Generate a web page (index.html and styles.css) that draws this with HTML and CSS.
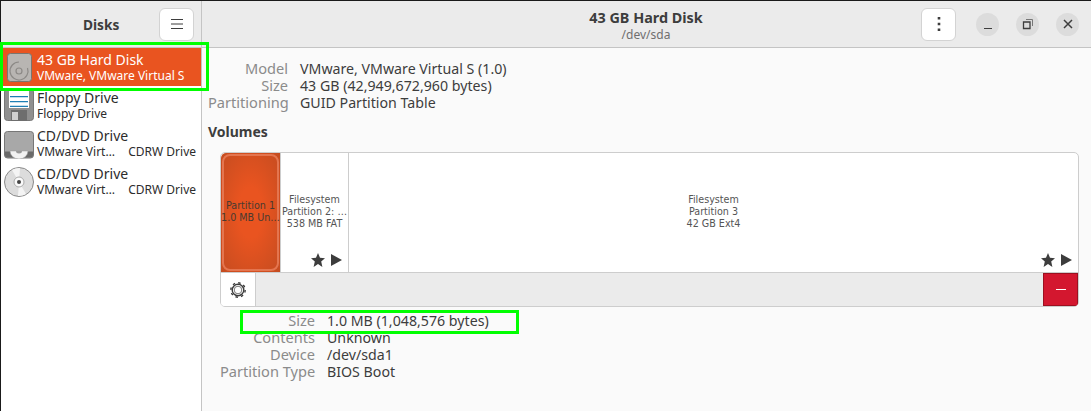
FILE: index.html
```html
<!DOCTYPE html>
<html lang="en">

<head>
  <meta charset="UTF-8" />
  <meta name="viewport" content="width=device-width, initial-scale=1.0" />
  <title>Disks</title>
  <link rel="stylesheet" href="styles.css">
</head>

<body>
  <div class="window">
    <!-- Left column: drive list -->
    <aside class="sidebar">
      <header class="side-head">
        <span class="side-title">Disks</span>
        <button class="head-btn side-menu">
          <svg width="12" height="10" viewBox="0 0 12 10"><path d="M0 .5h12M0 5h12M0 9.5h12" stroke="#3d3d3d" fill="none" /></svg>
        </button>
      </header>
      <ul class="drives">
        <li class="drive selected">
          <svg class="drive-icon" width="32" height="32" viewBox="0 0 32 32">
            <rect x="3.500" y="2.500" width="24" height="28" rx="3" fill="#b8b5b2" stroke="#7a756f" />
            <path d="M23.500 17A9 9 0 1 1 15 11" fill="none" stroke="#8c8986" stroke-width="1.200" />
            <circle cx="15" cy="20" r="3" fill="none" stroke="#8c8986" stroke-width="1.200" />
          </svg>
          <div class="drive-text">
            <div class="drive-name">43 GB Hard Disk</div>
            <div class="drive-sub"><span>VMware, VMware Virtual S</span></div>
          </div>
        </li>
        <li class="drive">
          <svg class="drive-icon" width="32" height="32" viewBox="0 0 32 32">
            <rect x=".500" y="0" width="29" height="31.500" rx="3" fill="#8f8f8f" stroke="#777" />
            <rect x="5" y="0" width="20" height="19" fill="#fff" />
            <path d="M6 7.700h18M6 12.700h18M6 17.300h18" stroke="#1f7fb5" stroke-width="1.200" />
            <rect x="7" y="21" width="16" height="11" fill="#6e6e6e" />
            <rect x="8" y="23" width="6" height="8" fill="#d0d0d0" />
          </svg>
          <div class="drive-text">
            <div class="drive-name">Floppy Drive</div>
            <div class="drive-sub"><span>Floppy Drive</span></div>
          </div>
        </li>
        <li class="drive">
          <svg class="drive-icon" width="32" height="32" viewBox="0 0 32 32">
            <rect x=".500" y="4.500" width="29" height="26.500" rx="3" fill="#a8a8a8" stroke="#777" />
            <path d="M1 24.500h28V28a2.500 2.500 0 0 1-2.500 2.500h-23A2.500 2.500 0 0 1 1 28z" fill="#6a6a6a" />
            <path d="M6 24h18a9 8 0 0 1-18 0z" fill="#f2f2f2" stroke="#999" stroke-width=".500" />
            <path d="M12 24h6a3 2.500 0 0 1-6 0z" fill="#999" />
          </svg>
          <div class="drive-text">
            <div class="drive-name">CD/DVD Drive</div>
            <div class="drive-sub split"><span>VMware Virt…</span><span>CDRW Drive</span></div>
          </div>
        </li>
        <li class="drive">
          <svg class="drive-icon" width="32" height="32" viewBox="0 0 32 32">
            <circle cx="15" cy="17" r="14.500" fill="#dcdcdc" stroke="#8a8a8a" />
            <path d="M15 17 8 5a14 14 0 0 1 8-2zM15 17l7 12a14 14 0 0 1-8 2z" fill="#f4f4f4" />
            <circle cx="15" cy="17" r="5" fill="#fafafa" stroke="#aaa" />
            <circle cx="15" cy="17" r="2" fill="#444" />
          </svg>
          <div class="drive-text">
            <div class="drive-name">CD/DVD Drive</div>
            <div class="drive-sub split"><span>VMware Virt…</span><span>CDRW Drive</span></div>
          </div>
        </li>
      </ul>
    </aside>

    <!-- Right column: selected drive -->
    <main class="main">
      <header class="main-head">
        <div class="head-title">
          <div class="title">43 GB Hard Disk</div>
          <div class="subtitle">/dev/sda</div>
        </div>
        <button class="head-btn kebab">
          <svg width="4" height="14" viewBox="0 0 4 14"><path d="M.7 0h2.600v2.600H.7zM.7 5.700h2.600v2.600H.7zM.7 11.400h2.600V14H.7z" fill="#3d3d3d" /></svg>
        </button>
        <div class="win-btns">
          <span class="win-btn"><svg width="12" height="12" viewBox="0 0 12 12"><path d="M2 10.500h8" stroke="#3d3d3d" stroke-width="1" /></svg></span>
          <span class="win-btn"><svg width="12" height="12" viewBox="0 0 12 12"><path d="M1.500 4h6.500v6.500H1.500z" fill="none" stroke="#3d3d3d" stroke-width="1.300" /><path d="M4 1.500h6.500V8" fill="none" stroke="#777" /></svg></span>
          <span class="win-btn"><svg width="12" height="12" viewBox="0 0 12 12"><path d="m2 2 8 8M10 2l-8 8" stroke="#3d3d3d" stroke-width="1.500" /></svg></span>
        </div>
      </header>

      <div class="content">
        <dl class="info disk-info">
          <dt>Model</dt><dd>VMware, VMware Virtual S (1.0)</dd>
          <dt>Size</dt><dd>43 GB (42,949,672,960 bytes)</dd>
          <dt>Partitioning</dt><dd>GUID Partition Table</dd>
        </dl>

        <h2 class="volumes-title">Volumes</h2>

        <div class="volumes">
          <div class="partitions">
            <div class="part part-1">
              <div class="part-label">Partition 1<br>1.0 MB Un…</div>
            </div>
            <div class="part part-2">
              <div class="part-label">Filesystem<br>Partition 2: …<br>538 MB FAT</div>
              <div class="part-flags">
                <svg width="14" height="14" viewBox="0 0 14 14"><path d="M7 0l2 4.800 5 .4-3.800 3.300L11.400 14 7 11.100 2.600 14l1.200-5.500L0 5.200l5-.4z" fill="#3d3d3d" /></svg>
                <svg width="11" height="12" viewBox="0 0 11 12"><path d="M0 0l11 6-11 6z" fill="#3d3d3d" /></svg>
              </div>
            </div>
            <div class="part part-3">
              <div class="part-label">Filesystem<br>Partition 3<br>42 GB Ext4</div>
              <div class="part-flags">
                <svg width="14" height="14" viewBox="0 0 14 14"><path d="M7 0l2 4.800 5 .4-3.800 3.300L11.400 14 7 11.100 2.600 14l1.200-5.500L0 5.200l5-.4z" fill="#3d3d3d" /></svg>
                <svg width="11" height="12" viewBox="0 0 11 12"><path d="M0 0l11 6-11 6z" fill="#3d3d3d" /></svg>
              </div>
            </div>
          </div>
          <div class="vol-tools">
            <button class="gear-btn">
              <svg width="18" height="18" viewBox="0 0 18 18">
                <circle cx="9" cy="9" r="5.800" fill="none" stroke="#3d3d3d" stroke-width="1.400" />
                <circle cx="9" cy="9" r="7.200" fill="none" stroke="#3d3d3d" stroke-width="1.400" stroke-dasharray="2.500 3.150" />
                <circle cx="9" cy="9" r="3.800" fill="none" stroke="#777" />
              </svg>
            </button>
            <button class="del-btn"><span class="del-bar"></span></button>
          </div>
        </div>

        <dl class="info part-info">
          <dt>Size</dt><dd>1.0 MB (1,048,576 bytes)</dd>
          <dt>Contents</dt><dd>Unknown</dd>
          <dt>Device</dt><dd>/dev/sda1</dd>
          <dt>Partition Type</dt><dd>BIOS Boot</dd>
        </dl>
      </div>
    </main>
  </div>

  <!-- Green marks drawn on top of the screenshot -->
  <div class="mark mark-drive"></div>
  <div class="mark mark-size"></div>
</body>

</html>
```

FILE: styles.css
```css
* {
  box-sizing: border-box;
}

html,
body {
  margin: 0;
  padding: 0;
  height: 100%;
  overflow: hidden;
}

body {
  font-family: "Noto Sans", sans-serif;
  font-size: 14px;
  color: #3d3d3d;
  background: #fafafa;
  position: relative;
}

.window {
  display: flex;
  height: 411px;
  border-top: 1px solid #1a1a1a;
  border-left: 1px solid #1a1a1a;
}

/* sidebar */
.sidebar {
  width: 200px;
  flex: none;
  background: #fff;
}

.side-head {
  height: 47px;
  background: #ebebeb;
  border-bottom: 1px solid #c4c4c4;
  display: flex;
  align-items: center;
  padding-left: 82px;
}

.side-title {
  font-weight: 700;
  font-size: 13.700px;
  color: #3d3d3d;
  width: 76px;
}

.head-btn {
  width: 35px;
  height: 33px;
  background: #fff;
  border: 1px solid #d3d3d3;
  border-radius: 6px;
  padding: 0;
  display: flex;
  align-items: center;
  justify-content: center;
}

.drives {
  list-style: none;
  margin: 0;
  padding: 0 0 0 1px;
}

.drive {
  height: 38px;
  display: flex;
  align-items: center;
  gap: 1px;
  padding-left: 2px;
  color: #2c2c2c;
}

.drive.selected {
  background: #e95420;
  color: #fff;
}

.drive-icon {
  flex: none;
}

.drive-text {
  flex: 1;
  min-width: 0;
  padding-right: 5px;
}

.drive-name {
  font-size: 14px;
  line-height: 19px;
}

.drive-sub {
  font-size: 12px;
  line-height: 16px;
  margin-top: -1px;
  display: flex;
  white-space: nowrap;
}

.drive-sub.split {
  justify-content: space-between;
}

/* main */
.main {
  flex: 1;
  border-left: 1px solid #c4c4c4;
  min-width: 0;
}

.main-head {
  height: 47px;
  background: #ebebeb;
  border-bottom: 1px solid #c4c4c4;
  display: flex;
  align-items: center;
  padding-right: 12px;
}

.head-title {
  flex: 1;
  text-align: center;
  padding-left: 169px;
  padding-top: 2px;
}

.title {
  font-weight: 700;
  font-size: 14.400px;
  line-height: 18px;
}

.subtitle {
  font-size: 12px;
  line-height: 15px;
  color: #6f6f6f;
}

.kebab {
  margin-right: 20px;
}

.win-btns {
  display: flex;
  gap: 17px;
}

.win-btn {
  width: 23px;
  height: 23px;
  border-radius: 50%;
  background: #dcdcdc;
  display: flex;
  align-items: center;
  justify-content: center;
}

.content {
  padding: 12px 12px 0 6px;
}

.info {
  display: grid;
  margin: 0;
  line-height: 17px;
  column-gap: 12px;
}

.info dt {
  text-align: right;
  color: #8b8b8b;
  font-size: 14.600px;
  white-space: nowrap;
}

.info dd {
  margin: 0;
  font-size: 14.200px;
  color: #3d3d3d;
}

.disk-info {
  grid-template-columns: 80px 1fr;
}

.volumes-title {
  font-size: 14px;
  font-weight: 700;
  margin: 11px 0 11px;
  line-height: 19px;
}

.volumes {
  margin-left: 12px;
  border: 1px solid #cdcdcd;
  border-radius: 5px;
  background: #fff;
  overflow: hidden;
}

.partitions {
  display: flex;
  height: 120px;
  border-bottom: 1px solid #cdcdcd;
}

.part {
  position: relative;
  display: flex;
  align-items: center;
  justify-content: center;
  padding-bottom: 2px;
  border-right: 1px solid #cdcdcd;
  flex: none;
  overflow: hidden;
}

.part-label {
  font-family: "DejaVu Sans", sans-serif;
  font-size: 9.600px;
  line-height: 12px;
  text-align: center;
  color: #555;
  white-space: nowrap;
}

.part-1 {
  width: 60px;
  background: radial-gradient(ellipse at center, #e95420 30%, #c44c20 100%);
  border-radius: 5px 0 0 0;
}

/* lighter rounded outline inside the selected partition */
.part-1::before {
  content: "";
  position: absolute;
  inset: 1px;
  border: 2px solid #e4754f;
  border-radius: 8px;
}

.part-1 .part-label {
  color: #4a3a30;
  position: relative;
}

.part-2 {
  width: 68px;
}

.part-3 {
  flex: 1;
  border-right: none;
}

.part-flags {
  position: absolute;
  right: 6px;
  bottom: 5px;
  display: flex;
  align-items: center;
  gap: 6px;
}

.vol-tools {
  display: flex;
  height: 33px;
  background: #ebebeb;
}

.gear-btn {
  width: 35px;
  background: #fff;
  border: none;
  border-right: 1px solid #cdcdcd;
  padding: 0;
  display: flex;
  align-items: center;
  justify-content: center;
}

.del-btn {
  width: 35px;
  margin-left: auto;
  background: #d3172f;
  border: 1px solid #9c1020;
  padding: 0;
  display: flex;
  align-items: center;
  justify-content: center;
}

.del-bar {
  width: 10px;
  height: 1px;
  background: #fff;
}

.part-info {
  grid-template-columns: 95px 1fr;
  margin-left: 12px;
  margin-top: 5px;
}

/* annotation boxes */
.mark {
  position: absolute;
  border: 3px solid #00ff00;
  pointer-events: none;
}

.mark-drive {
  left: 0;
  top: 42px;
  width: 209px;
  height: 49px;
}

.mark-size {
  left: 240px;
  top: 310px;
  width: 279px;
  height: 24px;
}
```
